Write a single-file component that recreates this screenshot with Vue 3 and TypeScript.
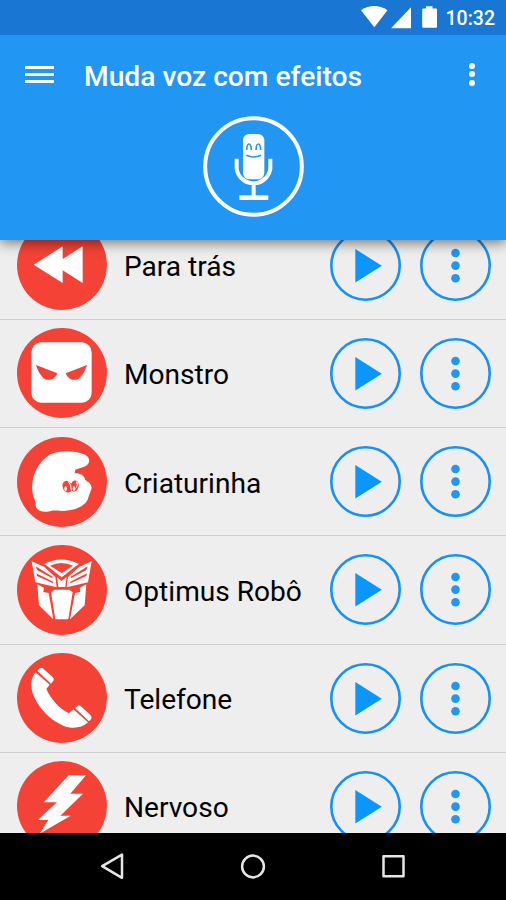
<script setup lang="ts">
type IconName = 'rewind' | 'monster' | 'creature' | 'robot' | 'phone' | 'bolt'

interface VoiceEffect {
  name: string
  icon: IconName
  viewBox: string
}

const effects: VoiceEffect[] = [
  { name: 'Para trás', icon: 'rewind', viewBox: '51 -30 270 270' },
  { name: 'Monstro', icon: 'monster', viewBox: '51 25 270 270' },
  { name: 'Criaturinha', icon: 'creature', viewBox: '51 26 270 270' },
  { name: 'Optimus Robô', icon: 'robot', viewBox: '51 27 270 270' },
  { name: 'Telefone', icon: 'phone', viewBox: '51 24 270 270' },
  { name: 'Nervoso', icon: 'bolt', viewBox: '51 34 270 270' },
]
</script>

<template>
  <div class="screen">
    <div class="status">
      <svg class="status-icons" viewBox="0 0 80 24" aria-hidden="true">
        <path d="M1 4.2Q14-4 27.500 4.200L14.300 21.300Z" />
        <path d="M51 1.200V22.300H31Z" />
        <path d="M66 .2h6.500v2.300h3.500q1 0 1 1v17.300q0 1-1 1H63.200q-1 0-1-1V3.500q0-1 1-1H66z" />
      </svg>
      <span class="clock">10:32</span>
    </div>

    <header class="header">
      <div class="toolbar">
        <button class="menu" aria-label="Menu"><i></i><i></i><i></i></button>
        <h1>Muda voz com efeitos</h1>
        <button class="overflow" aria-label="Mais opções"><i></i><i></i><i></i></button>
      </div>
      <svg class="mic" viewBox="38 30 303 303" aria-hidden="true">
        <circle cx="189.500" cy="181.500" r="145" fill="none" stroke="#fff" stroke-width="12" />
        <rect x="158" y="84" width="64" height="136" rx="19" fill="#fff" />
        <path d="M139 158v30a51 51 0 0 0 101 0v-30M190 238v34" fill="none" stroke="#fff" stroke-width="12" />
        <path d="M147 275h87" stroke="#fff" stroke-width="14" />
        <path d="M169 132c1-24 13-24 14 0M197 132c1-24 13-24 14 0M168 148q22 10 44 0" fill="none" stroke="#2196f3" stroke-width="5" />
      </svg>
    </header>

    <main class="viewport">
      <ul class="list">
        <li v-for="effect in effects" :key="effect.name" class="row">
          <svg class="avatar" :viewBox="effect.viewBox" aria-hidden="true">
            <template v-if="effect.icon === 'rewind'">
              <circle class="disc" cx="186" cy="105" r="135" />
              <path d="M101 104 188 49V87L248 49V159L188 121V159Z" />
            </template>
            <template v-else-if="effect.icon === 'monster'">
              <circle class="disc" cx="186" cy="160" r="135" />
              <rect x="94" y="68" width="181" height="181" rx="30" />
              <path class="cut" d="M108 136 172 161C163 184 137 186 127 171Q114 158 108 136ZM261 136 197 161C206 184 232 186 242 171Q255 158 261 136Z" />
            </template>
            <template v-else-if="effect.icon === 'creature'">
              <circle class="disc" cx="186" cy="161" r="135" />
              <path d="M107 232C108 222 105 216 101 207C87 163 105 105 151 78C181 64 225 67 252 78C270 85 271 101 262 109C253 118 235 119 226 124L224 135C240 134 253 140 256 156C266 159 274 169 275 179C272 191 267 199 265 208C259 231 231 242 208 246C185 250 169 246 155 247C138 252 111 253 107 232Z" />
              <ellipse class="cut" cx="224" cy="173" rx="12" ry="17" transform="rotate(12 224 173)" />
              <ellipse cx="227" cy="170" rx="6" ry="11" transform="rotate(15 227 170)" />
              <ellipse class="cut" cx="223" cy="169" rx="7" ry="11" />
              <ellipse class="cut" cx="202" cy="175" rx="14" ry="18" transform="rotate(-25 202 175)" />
              <ellipse cx="197" cy="181" rx="4" ry="7" />
              <ellipse cx="222" cy="181" rx="4" ry="7" />
              <path class="lid" d="M205 160Q214 168 214 186" />
            </template>
            <template v-else-if="effect.icon === 'robot'">
              <circle class="disc" cx="186" cy="162" r="135" />
              <path d="M132 84Q184 57 237 84L227 91 185 124 143 91Z" />
              <path class="cut" d="M150 89Q184 73 219 89L185 111Z" />
              <path d="M95 76 132 92 166 123 170 154 106 139ZM275 76 238 92 204 123 200 154 264 139Z" />
              <path class="cut" d="M107 91 158 122 157 127 111 102ZM109 112 159 137 159 142 111 120ZM263 91 212 122 213 127 259 102ZM261 112 211 137 211 142 259 120Z" />
              <path d="M171 123 184 135 200 123 196 153H175ZM112 145 132 155 130 168 146 171 160 250 117 208ZM259 145 239 155 241 168 225 171 210 250 254 208ZM153 169 163 161H208L218 169 205 250H166Z" />
            </template>
            <template v-else-if="effect.icon === 'phone'">
              <circle class="disc" cx="186" cy="159" r="135" />
              <path d="M112 77Q120 65 128 70L158 96Q163 101 161 106L153 116ZM107 82 149 119 139 132C152 162 178 191 207 205L220 193 264 232C244 251 214 252 190 242C154 226 123 198 104 159C89 129 91 99 107 82ZM225 189 235 181Q239 180 243 184L272 211Q276 216 274 221L267 229Z" />
            </template>
            <template v-else>
              <circle class="disc" cx="186" cy="169" r="135" />
              <path d="M206 77H258L211 132H249L181 198H212L119 252 145 211H113L171 158H131Z" />
            </template>
          </svg>
          <span class="label">{{ effect.name }}</span>
          <button class="round" :aria-label="`Reproduzir ${effect.name}`">
            <svg viewBox="0 0 71 71"><circle cx="35.500" cy="35.500" r="34.200" /><path d="M25.300 19 51.800 35.700 25.300 52.400Z" /></svg>
          </button>
          <button class="round" :aria-label="`Opções de ${effect.name}`">
            <svg viewBox="0 0 71 71">
              <circle cx="35.500" cy="35.500" r="34.200" />
              <g class="dots"><circle cx="35.500" cy="23" r="4.300" /><circle cx="35.500" cy="35.600" r="4.300" /><circle cx="35.500" cy="48.300" r="4.300" /></g>
            </svg>
          </button>
        </li>
      </ul>
    </main>

    <nav class="nav">
      <svg viewBox="0 0 330 65" aria-hidden="true">
        <path d="M12.200 31.200 32 19.600V42.800Z" />
        <circle cx="163" cy="31.500" r="10.900" />
        <rect x="293.500" y="21.200" width="20" height="20" />
      </svg>
    </nav>
  </div>
</template>

<style>
body {
  margin: 0;
}
</style>

<style scoped>
.screen {
  width: 506px;
  height: 900px;
  display: flex;
  flex-direction: column;
  overflow: hidden;
  background: #eee;
  font-family: Roboto, 'Liberation Sans', sans-serif;
}
button {
  padding: 0;
  border: 0;
  background: none;
}
.status {
  height: 35px;
  flex: none;
  box-sizing: border-box;
  padding: 1px 11px 0 0;
  display: flex;
  justify-content: flex-end;
  align-items: center;
  position: relative;
  z-index: 2;
  background: #1976d2;
  color: #fff;
}
.status-icons {
  width: 80px;
  height: 24px;
  margin-right: 6px;
  fill: #fff;
}
.clock {
  font-size: 19.5px;
  font-weight: 500;
  line-height: 24px;
  padding-top: 2px;
}
.header {
  height: 205px;
  flex: none;
  display: flex;
  flex-direction: column;
  align-items: center;
  background: #2196f3;
  position: relative;
  z-index: 1;
  box-shadow: 0 3px 12px rgba(0, 0, 0, 0.5);
}
.toolbar {
  width: 100%;
  height: 80.5px;
  box-sizing: border-box;
  padding: 0 31px 0 25px;
  display: flex;
  align-items: center;
}
.menu {
  width: 29px;
  margin-bottom: 2px;
  display: grid;
  gap: 4px;
}
.menu i {
  height: 3px;
  background: #fff;
}
h1 {
  flex: 1;
  margin: 3px 0 0 30px;
  color: #fff;
  font-size: 28.2px;
  font-weight: 500;
  line-height: 34px;
  white-space: nowrap;
}
.overflow {
  margin-bottom: 2px;
  display: grid;
  gap: 2.4px;
}
.overflow i {
  width: 6px;
  height: 6px;
  border-radius: 50%;
  background: #fff;
}
.mic {
  width: 101px;
  height: 101px;
}
.viewport {
  height: 593px;
  flex: none;
  overflow: hidden;
}
.list {
  list-style: none;
  margin: -28.5px 0 0;
  padding: 0;
}
.row {
  height: 108.25px;
  box-sizing: border-box;
  border-bottom: 1px solid #ccc;
  padding: 0 15px 0 17px;
  display: flex;
  align-items: center;
}
.avatar {
  width: 90px;
  height: 90px;
  fill: #fff;
}
.disc,
.cut {
  fill: #f44336;
}
.lid {
  fill: none;
  stroke: #fff;
  stroke-width: 3;
}
.label {
  flex: 1;
  margin: 4px 0 0 17px;
  color: #000;
  font-size: 28.1px;
  line-height: 34px;
  white-space: nowrap;
}
.round {
  width: 71px;
  height: 71px;
}
.round + .round {
  margin-left: 19px;
}
.round svg {
  display: block;
  fill: none;
  stroke: #1691f5;
  stroke-width: 2.6;
}
.round path {
  fill: #0a96fb;
  stroke: none;
}
.round .dots {
  fill: #2196f3;
  stroke: none;
}
.nav {
  height: 67px;
  flex: none;
  display: flex;
  justify-content: center;
  align-items: flex-end;
  background: #000;
}
.nav svg {
  width: 330px;
  height: 65px;
  margin-right: -4px;
  fill: none;
  stroke: #e6e6e6;
  stroke-width: 2.5;
  stroke-linejoin: round;
}
</style>
